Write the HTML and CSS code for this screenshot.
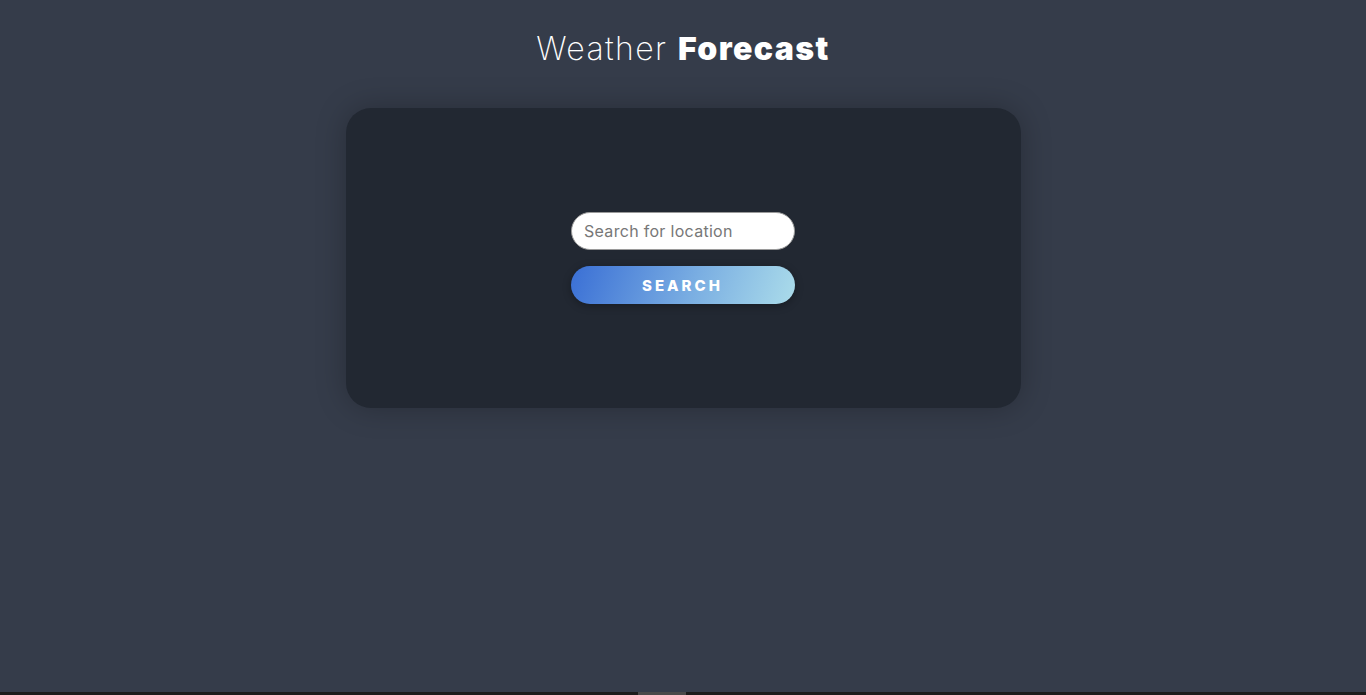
FILE: index.html
```html
<!DOCTYPE html>
<html>
<head>
<meta charset="utf-8">
<link rel="stylesheet" href="styles.css">
<title>Weather Forecast</title>
</head>
<body>
<div class="page">
  <h1 class="title"><span class="light">Weather</span> <span class="bold">Forecast</span></h1>
  <div class="card">
    <form class="search">
      <input class="search-input" type="text" placeholder="Search for location">
      <button class="search-btn" type="button">SEARCH</button>
    </form>
  </div>
</div>
<div class="scrollbar"><div class="thumb"></div></div>
</body>
</html>
```
FILE: styles.css
```css
html, body {
  margin: 0;
  padding: 0;
  height: 100%;
  overflow: hidden;
}
body {
  background: #353c4a;
  font-family: Inter, "Open Sans", "Liberation Sans", sans-serif;
  color: #fff;
  display: flex;
  flex-direction: column;
}
.page {
  height: 692px;
  display: flex;
  flex-direction: column;
  align-items: center;
}
.title {
  margin: 28px 0 0;
  height: 42px;
  font-size: 32px;
  line-height: 42px;
  font-weight: 200;
  letter-spacing: 1.4px;
}
.title .light { font-weight: 200; }
.title .bold { font-weight: 900; }
.card {
  margin-top: 38px;
  width: 675px;
  height: 300px;
  background: #222832;
  border-radius: 25px;
  box-shadow: 0 0 30px rgba(0, 0, 0, 0.25);
  display: flex;
  align-items: center;
  justify-content: center;
}
.search {
  display: flex;
  flex-direction: column;
  gap: 16px;
  width: 224px;
}
.search-input {
  box-sizing: border-box;
  height: 38px;
  width: 224px;
  border-radius: 19px;
  border: 1px solid #9a9a9a;
  background: #fff;
  padding: 0 12px;
  font-family: Inter, "Open Sans", "Liberation Sans", sans-serif;
  font-size: 16px;
  letter-spacing: 0.3px;
  color: #333;
  outline: none;
}
.search-input::placeholder { color: #777; }
.search-btn {
  height: 38px;
  width: 224px;
  border: none;
  border-radius: 19px;
  background: linear-gradient(110deg, #3a6fd5 0%, #7aaee2 55%, #abdcea 100%);
  color: #fff;
  font-family: Inter, "Open Sans", "Liberation Sans", sans-serif;
  font-weight: 800;
  font-size: 15px;
  letter-spacing: 3px;
  padding-left: 5px;
  box-shadow: 0 2px 8px rgba(0, 0, 0, 0.3);
}
.scrollbar {
  height: 3px;
  background: #1c1c1c;
  display: flex;
  justify-content: center;
}
.thumb {
  width: 48px;
  height: 3px;
  margin-left: -42px;
  background: #4a4a4a;
}
```
